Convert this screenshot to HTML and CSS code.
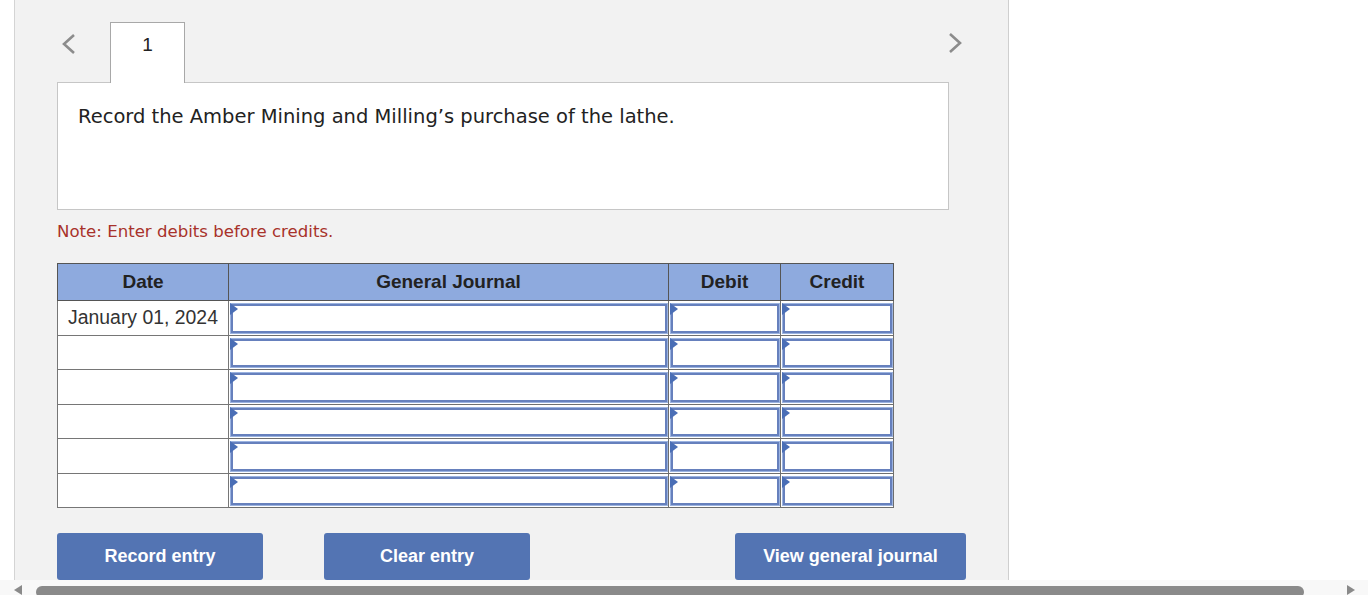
FILE: index.html
```html
<!DOCTYPE html>
<html>
<head>
<meta charset="utf-8">
<link rel="stylesheet" href="styles.css">
</head>
<body>
<div class="page">
  <div class="panel">
    <div class="nav">
      <div class="chev-box left">
        <svg width="16" height="22" viewBox="0 0 16 22"><path d="M13 2 L3 11 L13 20" fill="none" stroke="#8c8c8c" stroke-width="2.6"/></svg>
      </div>
      <div class="tab">1</div>
      <div class="spacer"></div>
      <div class="chev-box right">
        <svg width="16" height="22" viewBox="0 0 16 22"><path d="M3 2 L13 11 L3 20" fill="none" stroke="#8c8c8c" stroke-width="2.6"/></svg>
      </div>
    </div>
    <div class="question">Record the Amber Mining and Milling’s purchase of the lathe.</div>
    <p class="note">Note: Enter debits before credits.</p>
    <table class="journal">
      <colgroup>
        <col class="c-date"><col class="c-gj"><col class="c-dr"><col class="c-cr">
      </colgroup>
      <thead>
        <tr><th>Date</th><th>General Journal</th><th>Debit</th><th>Credit</th></tr>
      </thead>
      <tbody>
        <tr><td class="date">January 01, 2024</td><td class="in"><div class="box"></div><span class="tri"></span></td><td class="in"><div class="box"></div><span class="tri"></span></td><td class="in"><div class="box"></div><span class="tri"></span></td></tr>
        <tr><td class="date"></td><td class="in"><div class="box"></div><span class="tri"></span></td><td class="in"><div class="box"></div><span class="tri"></span></td><td class="in"><div class="box"></div><span class="tri"></span></td></tr>
        <tr><td class="date"></td><td class="in"><div class="box"></div><span class="tri"></span></td><td class="in"><div class="box"></div><span class="tri"></span></td><td class="in"><div class="box"></div><span class="tri"></span></td></tr>
        <tr><td class="date"></td><td class="in"><div class="box"></div><span class="tri"></span></td><td class="in"><div class="box"></div><span class="tri"></span></td><td class="in"><div class="box"></div><span class="tri"></span></td></tr>
        <tr><td class="date"></td><td class="in"><div class="box"></div><span class="tri"></span></td><td class="in"><div class="box"></div><span class="tri"></span></td><td class="in"><div class="box"></div><span class="tri"></span></td></tr>
        <tr><td class="date"></td><td class="in"><div class="box"></div><span class="tri"></span></td><td class="in"><div class="box"></div><span class="tri"></span></td><td class="in"><div class="box"></div><span class="tri"></span></td></tr>
      </tbody>
    </table>
    <div class="buttons">
      <button class="btn b-record">Record entry</button>
      <button class="btn b-clear">Clear entry</button>
      <button class="btn b-view">View general journal</button>
    </div>
  </div>
  <div class="hscroll">
    <span class="arr arr-l"></span>
    <div class="thumb"></div>
    <span class="arr arr-r"></span>
  </div>
</div>
</body>
</html>
```
FILE: styles.css
```css
html, body {
  margin: 0;
  padding: 0;
  background: #ffffff;
  overflow: hidden;
}
body {
  font-family: "Liberation Sans", Arial, sans-serif;
  color: #222;
}
.page {
  width: 1368px;
  height: 595px;
}
.panel {
  margin-left: 14px;
  width: 995px;
  height: 580px;
  box-sizing: border-box;
  background: #f2f2f2;
  border-left: 1px solid #d4d4d4;
  border-right: 1px solid #cfcfcf;
  padding: 22px 0 0 42px;
}
.nav {
  display: flex;
  align-items: flex-start;
  width: 908px;
  height: 60px;
}
.chev-box {
  display: flex;
  align-items: center;
  height: 44px;
}
.chev-box.left {
  width: 53px;
  padding-left: 4px;
  box-sizing: border-box;
  margin-top: 0;
}
.chev-box.right {
  margin-top: -1px;
  width: 18px;
  margin-left: -2px;
}
.tab {
  width: 75px;
  height: 61px;
  box-sizing: border-box;
  background: #fff;
  border: 1px solid #a8a8a8;
  border-bottom: none;
  text-align: center;
  font-size: 19px;
  line-height: 44px;
  color: #222;
  position: relative;
  z-index: 1;
}
.spacer { flex: 1; }
.question {
  width: 892px;
  height: 128px;
  box-sizing: border-box;
  background: #fff;
  border: 1px solid #c6c6c6;
  padding: 22px 0 0 20px;
  font-family: "DejaVu Sans", Verdana, sans-serif;
  font-size: 19.5px;
  color: #222;
}
.note {
  margin: 12px 0 0 0;
  height: 19px;
  font-family: "DejaVu Sans", Verdana, sans-serif;
  font-size: 16.6px;
  color: #a8322b;
}
.journal {
  margin-top: 22px;
  border-collapse: collapse;
  table-layout: fixed;
  width: 837px;
}
.c-date { width: 171px; }
.c-gj { width: 440px; }
.c-dr { width: 112px; }
.c-cr { width: 113px; }
.journal th {
  background: #8eaade;
  border: 1px solid #555;
  height: 36px;
  padding: 0;
  font-size: 19px;
  font-weight: bold;
  color: #222;
}
.journal td {
  border: 1px solid #767676;
  height: 32.5px;
  padding: 0;
  background: #fff;
}
.journal td.date {
  text-align: center;
  font-size: 19.4px;
  color: #333;
}
.journal td.in {
  position: relative;
  padding: 1px 0 0 1px;
  border-color: #6e6e6e;
}
.journal td.in .box {
  height: 30.5px;
  box-sizing: border-box;
  border: 1px solid #9bb3e0;
  box-shadow: inset 0 0 0 2px #6680bd;
  background: #fff;
}
.tri {
  position: absolute;
  left: 1px;
  top: 2px;
  width: 0;
  height: 0;
  border-top: 6px solid transparent;
  border-bottom: 6px solid transparent;
  border-left: 8px solid #4a6eb6;
}
.buttons {
  display: flex;
  margin-top: 25px;
}
.btn {
  height: 47px;
  border: none;
  border-radius: 3px;
  background: #5374b3;
  color: #fff;
  font-family: "Liberation Sans", Arial, sans-serif;
  font-size: 18px;
  font-weight: bold;
  padding: 0;
}
.b-record { width: 206px; }
.b-clear { width: 206px; margin-left: 61px; }
.b-view { width: 231px; margin-left: 205px; }
.hscroll {
  position: relative;
  height: 15px;
  background: #f8f8f8;
  display: flex;
  align-items: flex-start;
}
.thumb {
  margin-left: 14px;
  margin-top: 6px;
  width: 1268px;
  height: 12px;
  background: #8a8a8a;
  border-radius: 6px;
}
.arr {
  display: block;
  width: 0;
  height: 0;
  margin-top: 5px;
  border-top: 5px solid transparent;
  border-bottom: 5px solid transparent;
}
.arr-l {
  margin-left: 14px;
  border-right: 8px solid #8a8a8a;
}
.arr-r {
  margin-left: 43px;
  border-left: 8px solid #8a8a8a;
}
```
